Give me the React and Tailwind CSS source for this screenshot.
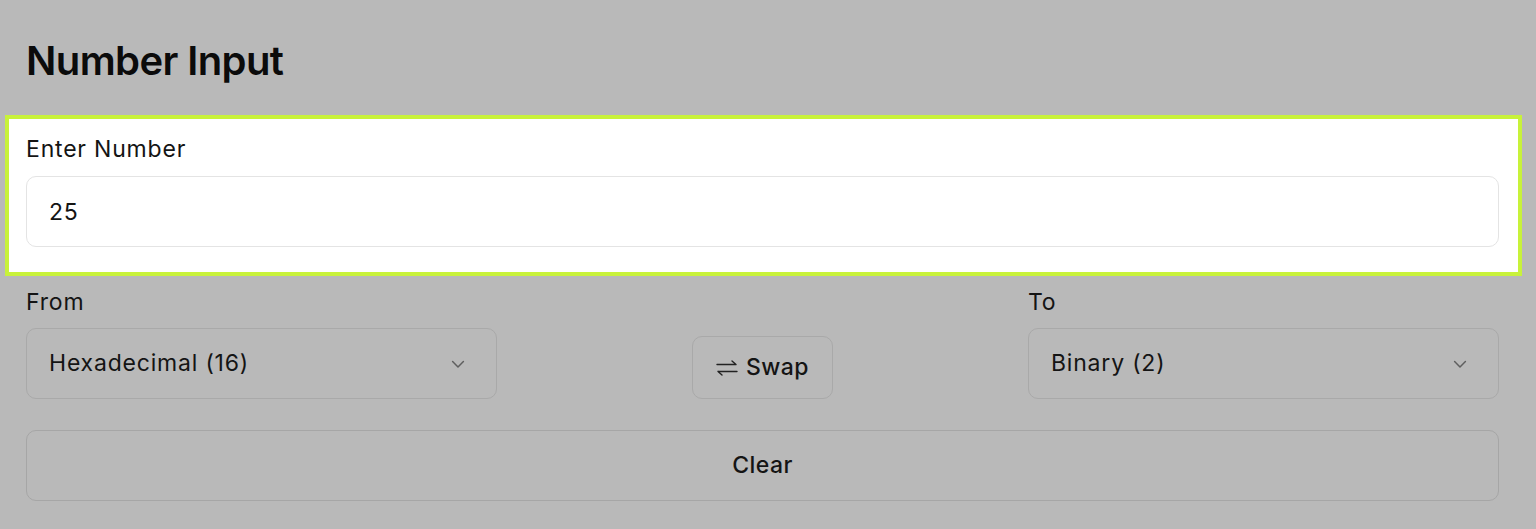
import { useState } from "react";

function Chevron() {
    return (
        <svg width="20" height="20" viewBox="0 0 24 24" fill="none" stroke="#5f5f5f" strokeWidth="1.8" strokeLinecap="round" strokeLinejoin="round">
            <path d="M5.5 9l6.5 6.5L18.5 9" />
        </svg>
    );
}

function SwapIcon() {
    return (
        <svg width="22" height="16" viewBox="0 0 22 16" fill="none" stroke="#222" strokeWidth="1.4" strokeLinecap="round" strokeLinejoin="round">
            <path d="M1 4.5h19M16 1l4 3.5" />
            <path d="M21 11.5H2M6 15l-4-3.5" />
        </svg>
    );
}

function FakeSelect({ value }) {
    return (
        <div className="h-[71px] w-full flex items-center justify-between pl-[22px] pr-[28px] rounded-[10px] border border-[#a9a9a9] bg-[#b9b9b9] text-[23px] tracking-[0.035em] text-[#141414]">
            <span>{value}</span>
            <Chevron />
        </div>
    );
}

export default function App() {
    const [number, setNumber] = useState("25");

    return (
        <div
            className="min-h-[529px] w-full bg-[#b9b9b9] pl-[26px] pr-[37px] pt-[37px]"
            style={{ fontFamily: "Inter, 'Noto Sans', sans-serif" }}
        >
            <h1 className="text-[40px] leading-[48px] font-semibold tracking-[-0.015em] text-[#0b0b0b]">
                Number Input
            </h1>

            {/* highlighted field */}
            <div className="mt-[30px] -ml-[21px] -mr-[23px] border-[4px] border-[#c8f23a] bg-white pl-[17px] pr-[19px] pt-[16px] pb-[25px]">
                <label htmlFor="num" className="block text-[23px] leading-[28px] tracking-[0.035em] text-[#141414]">
                    Enter Number
                </label>
                <input
                    id="num"
                    value={number}
                    onChange={(e) => setNumber(e.target.value)}
                    className="mt-[13px] block w-full h-[71px] rounded-[10px] border border-[#e4e4e4] bg-white pl-[22px] text-[23px] tracking-[0.035em] text-[#141414] outline-none"
                />
            </div>

            <div className="mt-[12px] grid grid-cols-3 gap-x-[30px] items-end">
                <div>
                    <div className="text-[23px] leading-[28px] tracking-[0.035em] text-[#141414]">From</div>
                    <div className="mt-[12px]">
                        <FakeSelect value="Hexadecimal (16)" />
                    </div>
                </div>
                <div className="flex justify-center">
                    <button className="h-[63px] w-[141px] flex items-center justify-center gap-[8px] rounded-[10px] border border-[#a9a9a9] bg-[#b9b9b9] text-[23px] font-medium tracking-[0.02em] text-[#141414]">
                        <SwapIcon />
                        <span>Swap</span>
                    </button>
                </div>
                <div>
                    <div className="text-[23px] leading-[28px] tracking-[0.035em] text-[#141414]">To</div>
                    <div className="mt-[12px]">
                        <FakeSelect value="Binary (2)" />
                    </div>
                </div>
            </div>

            <button className="mt-[31px] w-full h-[71px] rounded-[10px] border-[1.5px] border-[#a6a6a6] bg-[#b9b9b9] text-[23px] font-medium tracking-[0.02em] text-[#141414]">
                Clear
            </button>
        </div>
    );
}
